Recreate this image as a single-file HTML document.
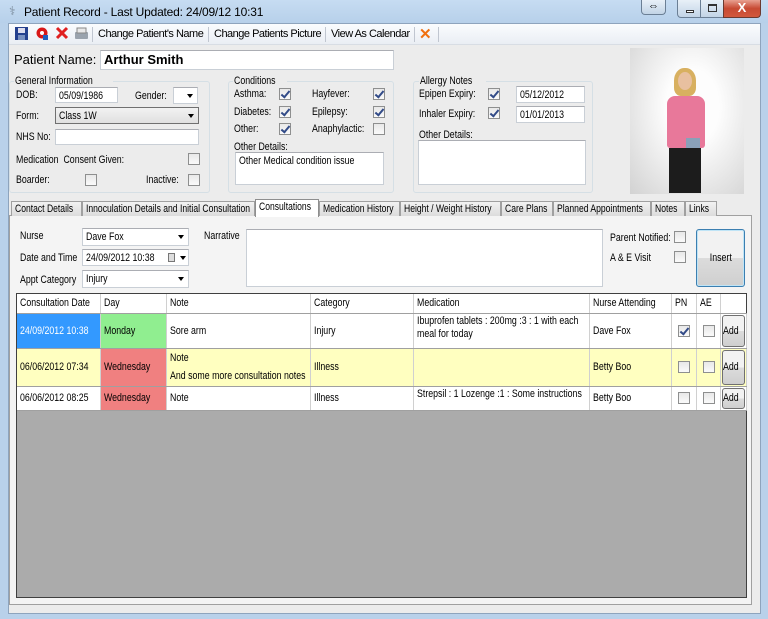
<!DOCTYPE html>
<html><head><meta charset="utf-8"><style>
*{box-sizing:border-box;margin:0;padding:0}
body{width:768px;height:619px;overflow:hidden;background:#b9d1ea;font-family:"Liberation Sans",sans-serif;font-size:11px;color:#000;position:relative}
.a{position:absolute;white-space:nowrap}
.l{transform:scaleX(.8);transform-origin:0 0}
.s{display:inline-block;transform:scaleX(.8);transform-origin:0 50%;white-space:nowrap}
.w{font-size:11px;letter-spacing:-0.5px}
.in{position:absolute;background:#fff;border:1px solid #c9cfd6;border-top-color:#abadb3;padding:1px 3px;line-height:14px;white-space:nowrap;overflow:hidden}
.cb{position:absolute;width:12px;height:12px;border:1px solid #8e8f8f;background:linear-gradient(#e8e8e8,#fafafa)}
.cb.k::after{content:"";position:absolute;left:3px;top:0px;width:3px;height:7px;border:solid #324b88;border-width:0 2px 2px 0;transform:rotate(40deg)}
.gb{position:absolute;border:1px solid #d5dfe5;border-radius:3px}
.gl{position:absolute;background:#ececec;padding:0 1px;line-height:12px;white-space:nowrap}
.dd{position:absolute;right:4px;top:6px;border:3px solid transparent;border-top:4px solid #000}
.tab{position:absolute;top:201px;height:15px;border:1px solid #a0a0a0;border-bottom:none;background:linear-gradient(#f2f2f2,#dcdcdc);line-height:14px;padding-left:3px;white-space:nowrap;overflow:hidden}
.tab span{display:inline-block;transform:scaleX(.78);transform-origin:0 50%}
td{border-right:1px solid #d0d0d0;border-bottom:1px solid #a0a0a0;padding:0 3px;vertical-align:middle;white-space:nowrap;overflow:hidden}
td span{display:inline-block;transform:scaleX(.8);transform-origin:0 50%}
table{border-collapse:collapse;table-layout:fixed}
.btn{position:absolute;border:1px solid #707070;border-radius:3px;background:linear-gradient(#f2f2f2 50%,#dcdcdc 50%,#cfcfcf);text-align:center}
</style></head><body>
<div class="a" style="left:0;top:0;width:768px;height:23px;background:linear-gradient(#c6dcf2,#b7d0ea)"></div>
<div class="a" style="left:9px;top:4px;color:#7a8a9a;font-size:12px">⚕</div>
<div class="a" style="left:24px;top:5px;font-size:12px;letter-spacing:-0.2px">Patient Record - Last Updated: 24/09/12 10:31</div>
<div class="a" style="left:641px;top:0;width:25px;height:15px;border:1px solid #6b7f95;border-top:none;border-radius:0 0 4px 4px;background:linear-gradient(#e8f0f8,#c2d4e6);text-align:center;line-height:12px;font-size:11px">⇔</div>
<div class="a" style="left:677px;top:0;width:24px;height:18px;border:1px solid #6b7f95;border-top:none;border-radius:0 0 0 4px;background:linear-gradient(#e8f0f8,#c2d4e6)"><div class="a" style="left:8px;top:10px;width:8px;height:3px;border:1px solid #333;background:#fff"></div></div>
<div class="a" style="left:700px;top:0;width:24px;height:18px;border:1px solid #6b7f95;border-top:none;background:linear-gradient(#e8f0f8,#c2d4e6)"><div class="a" style="left:7px;top:4px;width:9px;height:8px;border:1px solid #333;border-top-width:2px"></div></div>
<div class="a" style="left:723px;top:0;width:38px;height:18px;border:1px solid #6b3a30;border-top:none;border-radius:0 0 4px 0;background:linear-gradient(#e8a090,#c74a33 50%,#d2583c);color:#fff;font-weight:bold;text-align:center;line-height:15px;font-size:13px">X</div>
<div class="a" style="left:8px;top:23px;width:753px;height:591px;background:#ececec;border:1px solid #8ea4bd"></div>
<div class="a" style="left:9px;top:24px;width:751px;height:21px;background:linear-gradient(#fafcfe,#eaeef4);border-bottom:1px solid #d8dde4"></div>
<svg class="a" style="left:14px;top:26px" width="80" height="16">
<rect x="1" y="1" width="13" height="13" fill="#24408e"/><rect x="4" y="2" width="7" height="5" fill="#dde"/><rect x="4" y="9" width="7" height="5" fill="#7890c0"/>
<circle cx="28" cy="7" r="5.5" fill="#d81818"/><circle cx="28" cy="7" r="2" fill="#fff"/><rect x="29" y="9" width="5" height="5" fill="#1d5fbf"/>
<path d="M43 2l10 10M53 2l-10 10" stroke="#e02020" stroke-width="3"/>
<rect x="61" y="6" width="13" height="7" rx="1" fill="#9aa3ad"/><rect x="63" y="2" width="9" height="5" fill="#e8e8e8" stroke="#888"/>
</svg>
<div class="a" style="left:92px;top:27px;width:1px;height:15px;background:#c0c6d0"></div>
<div class="a w" style="left:98px;top:28px">Change Patient's Name</div>
<div class="a" style="left:208px;top:27px;width:1px;height:15px;background:#c0c6d0"></div>
<div class="a w" style="left:214px;top:28px">Change Patients Picture</div>
<div class="a" style="left:325px;top:27px;width:1px;height:15px;background:#c0c6d0"></div>
<div class="a w" style="left:331px;top:28px">View As Calendar</div>
<div class="a" style="left:414px;top:27px;width:1px;height:15px;background:#c0c6d0"></div>
<div class="a" style="left:419px;top:25px;color:#f07010;font-size:15px;font-weight:bold">✕</div>
<div class="a" style="left:438px;top:27px;width:1px;height:15px;background:#c0c6d0"></div>

<div class="a" style="left:14px;top:52px;font-size:13px">Patient Name:</div>
<div class="in" style="left:100px;top:50px;width:294px;height:20px;font-size:13px;font-weight:bold;line-height:16px">Arthur Smith</div>

<div class="gb" style="left:9px;top:81px;width:201px;height:112px"></div>
<div class="gl" style="left:14px;top:75px"><span class="s">General Information</span></div>
<div class="a l" style="left:16px;top:89px">DOB:</div>
<div class="in" style="left:55px;top:87px;width:63px;height:16px"><span class="s">05/09/1986</span></div>
<div class="a l" style="left:135px;top:90px">Gender:</div>
<div class="in" style="left:173px;top:87px;width:25px;height:17px"><div class="dd"></div></div>
<div class="a l" style="left:16px;top:110px">Form:</div>
<div class="in" style="left:55px;top:107px;width:144px;height:17px;border-color:#707070;background:linear-gradient(#f2f2f2,#e0e0e0)"><span class="s">Class 1W</span><div class="dd"></div></div>
<div class="a l" style="left:16px;top:131px">NHS No:</div>
<div class="in" style="left:55px;top:129px;width:144px;height:16px"></div>
<div class="a l" style="left:16px;top:154px">Medication&nbsp; Consent Given:</div>
<div class="cb" style="left:188px;top:153px"></div>
<div class="a l" style="left:16px;top:174px">Boarder:</div>
<div class="cb" style="left:85px;top:174px"></div>
<div class="a l" style="left:146px;top:174px">Inactive:</div>
<div class="cb" style="left:188px;top:174px"></div>

<div class="gb" style="left:228px;top:81px;width:166px;height:112px"></div>
<div class="gl" style="left:233px;top:75px"><span class="s">Conditions</span></div>
<div class="a l" style="left:234px;top:88px">Asthma:</div><div class="cb k" style="left:279px;top:88px"></div>
<div class="a l" style="left:312px;top:88px">Hayfever:</div><div class="cb k" style="left:373px;top:88px"></div>
<div class="a l" style="left:234px;top:106px">Diabetes:</div><div class="cb k" style="left:279px;top:106px"></div>
<div class="a l" style="left:312px;top:106px">Epilepsy:</div><div class="cb k" style="left:373px;top:106px"></div>
<div class="a l" style="left:234px;top:123px">Other:</div><div class="cb k" style="left:279px;top:123px"></div>
<div class="a l" style="left:312px;top:123px">Anaphylactic:</div><div class="cb" style="left:373px;top:123px"></div>
<div class="a l" style="left:234px;top:141px">Other Details:</div>
<div class="in" style="left:235px;top:152px;width:149px;height:33px"><span class="s">Other Medical condition issue</span></div>

<div class="gb" style="left:413px;top:81px;width:180px;height:112px"></div>
<div class="gl" style="left:419px;top:75px"><span class="s">Allergy Notes</span></div>
<div class="a l" style="left:419px;top:88px">Epipen Expiry:</div><div class="cb k" style="left:488px;top:88px"></div>
<div class="in" style="left:516px;top:86px;width:69px;height:17px"><span class="s">05/12/2012</span></div>
<div class="a l" style="left:419px;top:108px">Inhaler Expiry:</div><div class="cb k" style="left:488px;top:107px"></div>
<div class="in" style="left:516px;top:106px;width:69px;height:17px"><span class="s">01/01/2013</span></div>
<div class="a l" style="left:419px;top:129px">Other Details:</div>
<div class="in" style="left:418px;top:140px;width:168px;height:45px"></div>

<div class="a" style="left:630px;top:48px;width:114px;height:146px;background:radial-gradient(ellipse at 55% 40%,#fdfdfd 30%,#d2d2d2 100%)">
<div class="a" style="left:44px;top:20px;width:22px;height:28px;border-radius:45% 45% 30% 30%;background:#d8b060"></div>
<div class="a" style="left:48px;top:24px;width:14px;height:18px;border-radius:50%;background:#e8c0a0"></div>
<div class="a" style="left:37px;top:48px;width:38px;height:52px;border-radius:8px 8px 3px 3px;background:#e8789a"></div>
<div class="a" style="left:56px;top:90px;width:14px;height:22px;background:#8aa0b8"></div>
<div class="a" style="left:39px;top:100px;width:32px;height:45px;background:#1c1c1c"></div>
</div>

<div class="a" style="left:9px;top:215px;width:743px;height:390px;background:#f4f4f4;border:1px solid #a0a0a0"></div>
<div class="tab" style="left:11px;width:71px"><span>Contact Details</span></div>
<div class="tab" style="left:82px;width:173px"><span>Innoculation Details and Initial Consultation</span></div>
<div class="tab" style="left:255px;top:199px;height:18px;width:64px;background:#fff;z-index:2;border-color:#8e8e8e"><span>Consultations</span></div>
<div class="tab" style="left:319px;width:81px"><span>Medication History</span></div>
<div class="tab" style="left:400px;width:101px"><span>Height / Weight History</span></div>
<div class="tab" style="left:501px;width:52px"><span>Care Plans</span></div>
<div class="tab" style="left:553px;width:98px"><span>Planned Appointments</span></div>
<div class="tab" style="left:651px;width:34px"><span>Notes</span></div>
<div class="tab" style="left:685px;width:32px"><span>Links</span></div>

<div class="a l" style="left:20px;top:230px">Nurse</div>
<div class="in" style="left:82px;top:228px;width:107px;height:18px;line-height:15px"><span class="s">Dave Fox</span><div class="dd"></div></div>
<div class="a l" style="left:20px;top:252px">Date and Time</div>
<div class="in" style="left:82px;top:249px;width:107px;height:17px"><span class="s">24/09/2012 10:38</span><div class="a" style="left:85px;top:3px;width:7px;height:9px;border:1px solid #777;background:#ddd"></div><div class="dd" style="right:2px"></div></div>
<div class="a l" style="left:20px;top:274px">Appt Category</div>
<div class="in" style="left:82px;top:270px;width:107px;height:18px;line-height:15px"><span class="s">Injury</span><div class="dd"></div></div>
<div class="a l" style="left:204px;top:230px">Narrative</div>
<div class="in" style="left:246px;top:229px;width:357px;height:58px"></div>
<div class="a l" style="left:610px;top:232px">Parent Notified:</div><div class="cb" style="left:674px;top:231px"></div>
<div class="a l" style="left:610px;top:252px">A &amp; E Visit</div><div class="cb" style="left:674px;top:251px"></div>
<div class="btn" style="left:696px;top:229px;width:49px;height:58px;line-height:56px;border-color:#3c7fb1;box-shadow:inset 0 0 0 1px #bfe4f6"><span class="s" style="transform-origin:50% 50%">Insert</span></div>

<div class="a" style="left:16px;top:293px;width:731px;height:305px;background:#ababab;border:1px solid #404040"></div>
<table class="a" style="left:17px;top:294px;width:729px">
<colgroup><col style="width:83px"><col style="width:66px"><col style="width:144px"><col style="width:103px"><col style="width:176px"><col style="width:82px"><col style="width:25px"><col style="width:24px"><col style="width:26px"></colgroup>
<tr style="height:19px;background:#fff"><td><span>Consultation Date</span></td><td><span>Day</span></td><td><span>Note</span></td><td><span>Category</span></td><td><span>Medication</span></td><td><span>Nurse Attending</span></td><td><span>PN</span></td><td><span>AE</span></td><td style="border-right:none"></td></tr>
<tr style="height:35px;background:#fff"><td style="background:#3399ff;color:#fff"><span>24/09/2012 10:38</span></td><td style="background:#90ee90"><span>Monday</span></td><td><span>Sore arm</span></td><td><span>Injury</span></td><td style="vertical-align:top;line-height:13px;padding-top:1px"><span>Ibuprofen tablets : 200mg :3 : 1 with each<br>meal for today</span></td><td><span>Dave Fox</span></td><td style="position:relative"><div class="cb k" style="left:6px;top:11px"></div></td><td style="position:relative"><div class="cb" style="left:6px;top:11px"></div></td><td style="position:relative;padding:0"><div class="btn" style="left:1px;top:1px;width:23px;height:32px;line-height:30px"><span>Add</span></div></td></tr>
<tr style="height:38px;background:#ffffc0"><td><span>06/06/2012 07:34</span></td><td style="background:#f08080"><span>Wednesday</span></td><td style="line-height:18px"><span>Note<br>And some more consultation notes</span></td><td><span>Illness</span></td><td></td><td><span>Betty Boo</span></td><td style="position:relative"><div class="cb" style="left:6px;top:12px"></div></td><td style="position:relative"><div class="cb" style="left:6px;top:12px"></div></td><td style="position:relative;padding:0"><div class="btn" style="left:1px;top:1px;width:23px;height:35px;line-height:33px"><span>Add</span></div></td></tr>
<tr style="height:24px;background:#fff"><td><span>06/06/2012 08:25</span></td><td style="background:#f08080"><span>Wednesday</span></td><td><span>Note</span></td><td><span>Illness</span></td><td style="vertical-align:top;padding-top:1px"><span>Strepsil : 1 Lozenge :1 : Some instructions</span></td><td><span>Betty Boo</span></td><td style="position:relative"><div class="cb" style="left:6px;top:5px"></div></td><td style="position:relative"><div class="cb" style="left:6px;top:5px"></div></td><td style="position:relative;padding:0"><div class="btn" style="left:1px;top:1px;width:23px;height:21px;line-height:19px"><span>Add</span></div></td></tr>
</table>
</body></html>
